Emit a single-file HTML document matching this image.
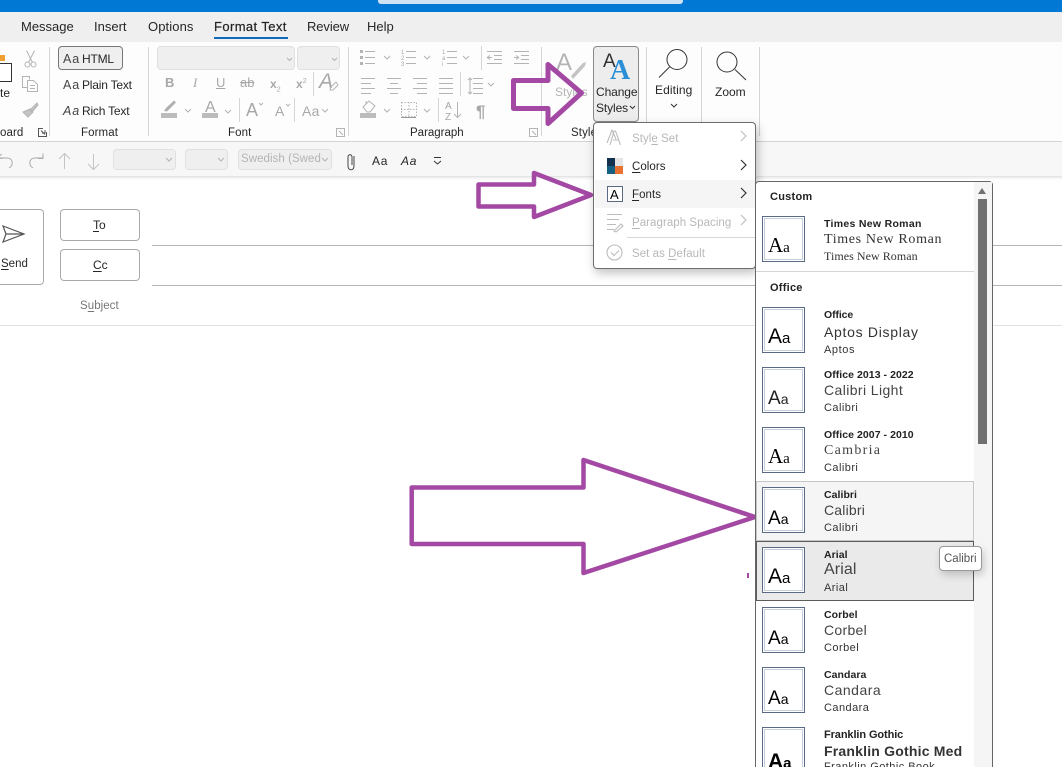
<!DOCTYPE html>
<html><head><meta charset="utf-8"><style>
html,body{margin:0;padding:0;width:1062px;height:767px;overflow:hidden;background:#fff}
#w{position:relative;width:1062px;height:767px;overflow:hidden;background:#fff;font-family:"Liberation Sans",sans-serif;color:#262626}
.r{position:absolute}
.t{position:absolute;white-space:nowrap;line-height:16px;font-size:12px}
.g{color:#b4b4b4}
.sep{position:absolute;width:1px;background:#d6d6d6}
.cb{position:absolute;background:#efefef;border:1px solid #e0e0e0;border-radius:4px;box-sizing:border-box}
u{text-underline-offset:2px}
.m{font-size:11.5px;letter-spacing:.05px}
.l{font-size:11.5px;letter-spacing:.1px;top:125px}
.box{position:absolute;left:762px;width:43px;height:46px;box-sizing:border-box;border:1px solid #5a6a85;background:#fff}
.box:before{content:"";position:absolute;left:1px;top:1px;right:1px;bottom:1px;border:1px solid #c5cedc}
.aa{position:absolute;left:5px;bottom:3px;line-height:20px;color:#000;white-space:nowrap;font-size:15px}
.aa b{font-weight:normal;font-size:21px}
.n{position:absolute;left:824px;font-weight:bold;font-size:10.5px;line-height:14px;color:#222;white-space:nowrap;letter-spacing:.05px;margin-top:2px}
.h{position:absolute;left:824px;font-size:14px;line-height:18px;color:#333;white-space:nowrap;letter-spacing:.5px}
.b{position:absolute;left:824px;font-size:11px;line-height:14px;color:#333;white-space:nowrap;letter-spacing:.45px;margin-top:2px}
svg{position:absolute;left:0;top:0}
</style></head><body><div id="w">
<div class="r" style="left:0;top:0;width:1062px;height:12px;background:#0078d4"></div>
<div class="r" style="left:378px;top:0;width:305px;height:4px;background:#cfe3f4;border-radius:0 0 3px 3px"></div>
<div class="r" style="left:0;top:12px;width:1062px;height:30px;background:#efefef"></div>
<div class="r" style="left:0;top:42px;width:1062px;height:99px;background:#fdfdfd"></div>
<div class="r" style="left:0;top:141px;width:1062px;height:36px;background:#f7f7f7;border-top:1px solid #d4d4d4;border-bottom:1px solid #e4e4e4;box-sizing:border-box"></div>
<div class="r" style="left:0;top:177px;width:1062px;height:3px;background:linear-gradient(#ececec,#fff)"></div>

<div class="t" style="left:21px;top:19px;font-size:13px">Message</div>
<div class="t" style="left:94px;top:19px;font-size:13px">Insert</div>
<div class="t" style="left:148px;top:19px;font-size:13px;letter-spacing:.1px">Options</div>
<div class="t" style="left:214px;top:19px;font-size:13px;letter-spacing:.4px;color:#222;-webkit-text-stroke:.2px #222">Format Text</div>
<div class="r" style="left:214px;top:37px;width:74px;height:2px;background:#0f6cbd"></div>
<div class="t" style="left:307px;top:19px;font-size:13px;letter-spacing:-.1px">Review</div>
<div class="t" style="left:367px;top:19px;font-size:13px">Help</div>

<!-- separators -->
<div class="sep" style="left:49px;top:47px;height:89px"></div>
<div class="sep" style="left:148px;top:47px;height:89px"></div>
<div class="sep" style="left:348px;top:47px;height:89px"></div>
<div class="sep" style="left:541px;top:47px;height:89px"></div>
<div class="sep" style="left:646px;top:47px;height:89px"></div>
<div class="sep" style="left:701px;top:47px;height:89px"></div>
<div class="sep" style="left:759px;top:47px;height:89px"></div>
<div class="sep" style="left:313px;top:72px;height:24px"></div>
<div class="sep" style="left:239px;top:98px;height:24px"></div>
<div class="sep" style="left:294px;top:98px;height:24px"></div>
<div class="sep" style="left:481px;top:46px;height:24px"></div>
<div class="sep" style="left:460px;top:72px;height:24px"></div>
<div class="sep" style="left:438px;top:98px;height:24px"></div>

<!-- clipboard -->
<div class="r" style="left:-4px;top:63px;width:14px;height:17px;border:1px solid #333;background:#fff"></div>
<div class="r" style="left:0;top:55px;width:5px;height:6px;background:#f0a030"></div>
<div class="t" style="left:0;top:85px">te</div>
<div class="t l" style="left:0">oard</div>

<!-- Format -->
<div class="r" style="left:58px;top:46px;width:65px;height:24px;box-sizing:border-box;background:#efefef;border:1px solid #777;border-radius:4px"></div>
<div class="t" style="left:63px;top:51px;font-size:12.5px;letter-spacing:.9px;color:#444">Aa</div><div class="t" style="left:82px;top:51px;letter-spacing:-.2px">HTML</div>
<div class="t" style="left:63px;top:77px;font-size:12.5px;letter-spacing:.9px;color:#444">Aa</div><div class="t" style="left:82px;top:77px;letter-spacing:-.2px">Plain Text</div>
<div class="t" style="left:63px;top:103px;font-size:12.5px;letter-spacing:.9px;font-style:italic;color:#444">Aa</div><div class="t" style="left:82px;top:103px;letter-spacing:-.2px">Rich Text</div>
<div class="t l" style="left:81px">Format</div>

<!-- Font -->
<div class="cb" style="left:157px;top:46px;width:138px;height:24px"></div>
<div class="cb" style="left:297px;top:46px;width:43px;height:24px"></div>
<div class="t" style="left:165px;top:75px;font-weight:bold;font-size:13px;color:#a8a8a8">B</div>
<div class="t" style="left:193px;top:75px;font-size:13px;font-family:'Liberation Serif',serif;font-style:italic;color:#a8a8a8">I</div>
<div class="t" style="left:216px;top:75px;font-size:13px;text-decoration:underline;color:#a8a8a8">U</div>
<div class="t" style="left:240px;top:75px;font-size:13px;text-decoration:line-through;color:#a8a8a8">ab</div>
<div class="t" style="left:270px;top:76px;font-weight:bold;font-size:12px;color:#a8a8a8">x<sub style="font-size:7px;font-weight:normal">2</sub></div>
<div class="t" style="left:296px;top:76px;font-weight:bold;font-size:12px;color:#a8a8a8">x<sup style="font-size:7px;font-weight:normal;line-height:0">2</sup></div>
<div class="t" style="left:319px;top:74px;font-size:21px;font-style:italic;color:#a8a8a8">A</div>
<div class="t" style="left:205px;top:100px;font-size:16px;color:#a8a8a8">A</div>
<div class="t" style="left:246px;top:102px;font-size:18px;color:#a8a8a8">A</div>
<div class="t" style="left:275px;top:103px;font-size:14px;color:#a8a8a8">A</div>
<div class="t" style="left:302px;top:103px;font-size:14px;letter-spacing:.3px;color:#a8a8a8">Aa</div>
<div class="t l" style="left:228px">Font</div>

<!-- Styles -->
<div class="t" style="left:556px;top:52px;font-size:24px;line-height:22px;color:#b4b4b4">A</div>
<div class="t g" style="left:555px;top:84px">Styles</div>
<div class="t l" style="left:571px">Style</div>
<div class="t l" style="left:410px;letter-spacing:0">Paragraph</div>

<div class="r" style="left:593px;top:46px;width:46px;height:76px;box-sizing:border-box;background:#ededed;border:1px solid #8a8a8a;border-radius:4px"></div>
<div class="t" style="left:596px;top:84px;letter-spacing:-.1px">Change</div>
<div class="t" style="left:596px;top:100px;letter-spacing:-.1px">Styles</div>
<div class="t" style="left:655px;top:82px;letter-spacing:.1px">Editing</div>
<div class="t" style="left:715px;top:84px">Zoom</div>

<!-- second toolbar -->
<div class="cb" style="left:113px;top:149px;width:63px;height:21px"></div>
<div class="cb" style="left:185px;top:149px;width:43px;height:21px"></div>
<div class="cb" style="left:238px;top:149px;width:94px;height:21px"></div>
<div class="t g" style="left:241px;top:151px;font-size:11.5px;letter-spacing:.05px">Swedish (Swed</div>
<div class="t" style="left:372px;top:153px;letter-spacing:.8px;font-size:12px">Aa</div>
<div class="t" style="left:401px;top:153px;letter-spacing:.8px;font-size:12px;font-style:italic">Aa</div>

<!-- compose -->
<div class="r" style="left:-6px;top:209px;width:50px;height:76px;box-sizing:border-box;border:1px solid #aaa;border-radius:4px"></div>
<div class="t" style="left:1px;top:256px;font-size:11.5px"><u>S</u>end</div>
<div class="r" style="left:60px;top:209px;width:80px;height:32px;box-sizing:border-box;border:1px solid #aaa;border-radius:4px"></div>
<div class="r" style="left:60px;top:249px;width:80px;height:32px;box-sizing:border-box;border:1px solid #aaa;border-radius:4px"></div>
<div class="t" style="left:93px;top:217px"><u>T</u>o</div>
<div class="t" style="left:93px;top:257px"><u>C</u>c</div>
<div class="t" style="left:80px;top:298px;color:#777;font-size:11.5px;letter-spacing:.05px">S<u>u</u>bject</div>
<div class="r" style="left:152px;top:245px;width:910px;height:1px;background:#b4b4b4"></div>
<div class="r" style="left:152px;top:285px;width:910px;height:1px;background:#b4b4b4"></div>
<div class="r" style="left:0;top:325px;width:1062px;height:1px;background:#e2e2e2"></div>

<!-- icons & arrows under popups -->
<svg width="1062" height="767" viewBox="0 0 1062 767" fill="none">
<g stroke="#b4b4b4" stroke-width="1">
<path d="M26.500 50.500l6 12M34.500 50.500l-6 12"/><circle cx="27.500" cy="64.500" r="2.500"/><circle cx="33.500" cy="64.500" r="2.500"/>
<path d="M27.500 87.500h-5v-11h7l0 3M27.500 80.500h6l4 4v7h-10zM30 85.500h5M30 88.500h5"/>
<path d="M37 103l-7 7 2 2 6-7zM30 109l-7 3 5 5 5-5z" fill="#c4c4c4"/>
<path d="M287 58l2.500 2.500 2.500-2.500M332 58l2.500 2.500 2.500-2.500"/>
<path d="M336.500 128.500h8v8h-8zM339 131l4 4"/>
<path d="M529.500 128.500h8v8h-8zM532 131l4 4"/>
<path d="M185 109l3 3 3-3M225 110l3 3 3-3M322 109l3 3 3-3"/>
<path d="M259 103l2 2 2-2M286 104l2 2 2-2" stroke-width="1"/>
<path d="M331 87l5-5 2 3-5 5h-3z"/>
<path d="M365 51.500h10M365 57.500h10M365 63.500h10M406 51.500h10M406 57.500h10M406 63.500h10M447 51.500h10M447 57.500h10M447 63.500h10M487 51.500h15M494 55.500h8M494 59.500h8M487 63.500h15M487 57.500h5M487 57.500l3-2M487 57.500l3 2M514 51.500h15M521 55.500h8M521 59.500h8M514 63.500h15M514 57.500h5M519 57.500l-3-2M519 57.500l-3 2"/>
<path d="M384 56l3 3 3-3M424 56l3 3 3-3M463 56l3 3 3-3M488 83l3 3 3-3M384 109l3 3 3-3M424 109l3 3 3-3"/>
<path d="M361 78.500h14M361 83.500h10M361 88.500h14M361 93.500h10M387 78.500h14M390 83.500h8M387 88.500h14M390 93.500h8M413 78.500h14M417 83.500h10M413 88.500h14M417 93.500h10M439 78.500h14M439 83.500h14M439 88.500h14M439 93.500h14"/>
<path d="M473 78.500h10M473 83.500h10M473 88.500h10M473 93.500h10M470 78v16M468 80l2-2 2 2M468 92l2 2 2-2"/>
<path d="M401.500 102.500h15v14h-15z" stroke-dasharray="1.500 1.500"/><path d="M409 102v15M401 109.500h15" stroke-dasharray="1.500 1.500"/><path d="M401 117.500h15" stroke="#999"/>
<path d="M457.500 102v15M454 114l3.500 3.500 3.500-3.500"/>
<path d="M363 107l6-6 6 5-5 6h-3z"/><path d="M366 104v-3"/>
<path d="M1.500 154l-4 4 5 .5M-2 158h9c6 0 7 7 2 10" stroke="#aaa"/>
<path d="M43 153.500v5h-5M43 158h-8c-6 0-7 7-2 10" stroke="#aaa"/>
<path d="M64.500 169v-15M59 159l5.500-5.500 5.500 5.500M93.500 154v15M88 164l5.500 5.500 5.500-5.500" stroke="#c4c4c4"/>
<path d="M166 158l3 3 3-3M218 158l3 3 3-3M322 158l3 3 3-3" stroke="#b4b4b4"/>
</g>
<path d="M43 128.500h-4.500v8h8v-4.500M41 130.500l4 4M45 130v3h-3" stroke="#555"/>
<path d="M161 113h16v5h-16zM202 113h16v5h-16zM360 113h16v5h-16z" fill="#bcbcbc"/>
<path d="M166 108l-2 3 3 .5 9-9-2-2z" fill="#b0b0b0"/>
<g fill="#b4b4b4"><rect x="360" y="50" width="3" height="3"/><rect x="360" y="56" width="3" height="3"/><rect x="360" y="62" width="3" height="3"/></g>
<g font-family="Liberation Sans" font-size="6" fill="#a8a8a8"><text x="401" y="54">1</text><text x="401" y="60">2</text><text x="401" y="66">3</text><text x="442" y="54">1</text><text x="442" y="60">a</text><text x="442" y="66">i</text></g>
<text x="445" y="109" font-family="Liberation Sans" font-size="10" fill="#a8a8a8">A</text><text x="445" y="120" font-family="Liberation Sans" font-size="10" fill="#a8a8a8">Z</text>
<text x="476" y="117" font-family="Liberation Sans" font-weight="bold" font-size="17" fill="#a8a8a8">¶</text>
<path d="M571 76l12-13 3-1-1 4-12 13z" fill="#c4c4c4"/>
<text x="603" y="67" font-family="Liberation Sans" font-size="19" fill="#333">A</text>
<text x="610" y="79" font-family="Liberation Serif" font-weight="bold" font-size="28" fill="#2a8fd6">A</text>
<g stroke="#333" stroke-width="1">
<circle cx="677" cy="59.500" r="10"/><path d="M669.500 67l-10.500 10.500"/>
<circle cx="727" cy="62" r="10"/><path d="M735 69.500l11 10.500"/>
<path d="M671 104l3 3 3-3M630 106l2.500 2.500 2.500-2.500"/>
<path d="M434 157.500h7M434 161l3.500 3 3.500-3" stroke-width="1"/>
<path d="M354 156v10c0 5-6 5-6 0v-9c0-3 4-3 4 0v8" stroke="#444"/>
</g>
<path d="M3 226l21 8-21 8 3-8zM6 234h18" stroke="#555" stroke-width="1.200"/>
<g stroke="#a349a4" stroke-width="4.500" stroke-linejoin="round">
<path d="M411.700 487.500H583.500V460L755 517 583.500 573V544H411.700Z"/>
<path d="M478.500 184.500H534V173L591 195 534 217V206.500H478.500Z"/>
<path d="M513.500 80.500H548V64.500L581.500 93 548 123.500V108.500H513.500Z" stroke-width="5"/>
</g>
<rect x="747" y="573" width="2" height="5" fill="#a349a4"/>
</svg>

<!-- Menu -->
<div class="r" style="left:593px;top:122px;width:163px;height:147px;box-sizing:border-box;background:#fff;border:1px solid #6e6e6e;border-radius:4px;box-shadow:2px 4px 10px rgba(0,0,0,.25)"></div>
<div class="r" style="left:595px;top:180px;width:160px;height:28px;background:#f5f5f5"></div>
<div class="r" style="left:627px;top:237px;width:128px;height:1px;background:#d6d6d6"></div>
<div class="t m" style="left:632px;top:131px;color:#b8b8b8">Styl<u>e</u> Set</div>
<div class="t m" style="left:632px;top:159px"><u>C</u>olors</div>
<div class="t m" style="left:632px;top:187px"><u>F</u>onts</div>
<div class="t m" style="left:632px;top:215px;color:#b8b8b8"><u>P</u>aragraph Spacing</div>
<div class="t m" style="left:632px;top:246px;color:#b8b8b8">Set as <u>D</u>efault</div>
<svg width="1062" height="767" viewBox="0 0 1062 767" fill="none" style="z-index:2">
<g stroke="#bcbcbc" stroke-width="1.100"><path d="M607 143l5-13 4 9M610 145l4-14 1.500 0 5 14M613 140h6"/>
<path d="M741 131l5 5-5 5M741 215l5 5-5 5"/>
<path d="M607 214.500h15M607 219.500h12M607 224.500h9M607 229.500h7M614 231l7-7 2 2-7 6z"/>
<circle cx="614.500" cy="252.500" r="7.500"/><path d="M611 252.500l3 3 5-5"/></g>
<path d="M741 160l5 5-5 5M741 188l5 5-5 5" stroke="#333" stroke-width="1.200"/>
<rect x="607" y="158" width="8" height="8" fill="#14304f"/><rect x="615" y="158" width="8" height="8" fill="#e4e4e4"/><rect x="607" y="166" width="8" height="8" fill="#156082"/><rect x="615" y="166" width="8" height="8" fill="#e97132"/>
<rect x="607.500" y="186.500" width="15" height="15" stroke="#5a6a85" fill="#fff"/>
<text x="610" y="199" font-family="Liberation Sans" font-size="13" fill="#000">A</text>
</svg>

<!-- Font panel -->
<div class="r" style="z-index:3;left:755px;top:181px;width:238px;height:596px;box-sizing:border-box;background:#fff;border:1px solid #666;border-radius:4px"></div>
<div class="r" style="z-index:3;left:974px;top:182px;width:18px;height:585px;background:#f5f5f5"></div>
<div class="r" style="z-index:3;left:978px;top:199px;width:9px;height:245px;background:#707070"></div>
<div class="r" style="z-index:3;left:978px;top:188px;width:0;height:0;border-left:4.500px solid transparent;border-right:4.500px solid transparent;border-bottom:6px solid #707070"></div>
<div class="r" style="z-index:3;left:756px;top:271px;width:218px;height:1px;background:#d4d4d4"></div>
<div class="r" style="z-index:3;left:756px;top:481px;width:218px;height:60px;box-sizing:border-box;background:#f5f5f5;border:1px solid #c6c6c6"></div>
<div class="r" style="z-index:3;left:756px;top:541px;width:218px;height:60px;box-sizing:border-box;background:#eaeaea;border:1px solid #5c5c5c"></div>

<div style="position:absolute;left:0;top:0;z-index:4">
<div class="t" style="left:770px;top:189px;font-weight:bold;font-size:11px;letter-spacing:.25px;color:#222">Custom</div>
<div class="t" style="left:770px;top:280px;font-weight:bold;font-size:11px;letter-spacing:.25px;color:#222">Office</div>

<div class="box" style="top:216px"><div class="aa" style="font-family:'Liberation Serif',serif"><b>A</b>a</div></div>
<div class="n" style="top:215px;letter-spacing:.3px">Times New Roman</div>
<div class="h" style="top:231px;font-family:'Liberation Serif',serif;letter-spacing:.65px">Times New Roman</div>
<div class="b" style="top:247px;font-family:'Liberation Serif',serif;font-size:12px;letter-spacing:.05px">Times New Roman</div>

<div class="box" style="top:307px"><div class="aa"><b>A</b>a</div></div>
<div class="n" style="top:306px;letter-spacing:-.1px">Office</div>
<div class="h" style="top:323px;letter-spacing:.7px">Aptos Display</div>
<div class="b" style="top:341px;letter-spacing:.6px">Aptos</div>

<div class="box" style="top:367px"><div class="aa" style="font-size:14px;color:#222"><b style="font-size:19px">A</b>a</div></div>
<div class="n" style="top:366px">Office 2013 - 2022</div>
<div class="h" style="top:381px;letter-spacing:.4px;color:#444">Calibri Light</div>
<div class="b" style="top:399px">Calibri</div>

<div class="box" style="top:427px"><div class="aa" style="font-family:'Liberation Serif',serif"><b>A</b>a</div></div>
<div class="n" style="top:426px">Office 2007 - 2010</div>
<div class="h" style="top:442px;font-family:'Liberation Serif',serif;letter-spacing:1.3px;color:#444">Cambria</div>
<div class="b" style="top:459px">Calibri</div>

<div class="box" style="top:487px"><div class="aa" style="font-size:14px"><b style="font-size:19px">A</b>a</div></div>
<div class="n" style="top:486px">Calibri</div>
<div class="h" style="top:501px;color:#444;letter-spacing:.2px">Calibri</div>
<div class="b" style="top:519px">Calibri</div>

<div class="box" style="top:547px"><div class="aa"><b>A</b>a</div></div>
<div class="n" style="top:546px">Arial</div>
<div class="h" style="top:560px;font-size:16px;letter-spacing:.1px;line-height:20px;color:#444">Arial</div>
<div class="b" style="top:579px">Arial</div>

<div class="box" style="top:607px"><div class="aa" style="font-size:14px"><b style="font-size:19px">A</b>a</div></div>
<div class="n" style="top:606px">Corbel</div>
<div class="h" style="top:621px;color:#444;letter-spacing:.3px">Corbel</div>
<div class="b" style="top:639px">Corbel</div>

<div class="box" style="top:667px"><div class="aa" style="font-size:14px"><b style="font-size:19px">A</b>a</div></div>
<div class="n" style="top:666px">Candara</div>
<div class="h" style="top:681px;color:#444">Candara</div>
<div class="b" style="top:699px">Candara</div>

<div class="box" style="top:727px;height:50px"><div class="aa" style="top:24px;bottom:auto;font-weight:bold"><b style="font-weight:bold">A</b>a</div></div>
<div class="n" style="top:726px;font-size:11px;letter-spacing:-.1px">Franklin Gothic</div>
<div class="h" style="top:742px;font-weight:bold;font-size:14px;letter-spacing:.2px;color:#333">Franklin Gothic Med</div>
<div class="b" style="top:758px">Franklin Gothic Book</div>

<div class="r" style="left:939px;top:546px;width:43px;height:25px;box-sizing:border-box;background:#fff;border:1px solid #999;border-radius:4px;box-shadow:2px 4px 8px rgba(0,0,0,.18)"></div>
<div class="t" style="left:944px;top:551px;font-size:11.5px;color:#555">Calibri</div>
</div>
</div></body></html>
